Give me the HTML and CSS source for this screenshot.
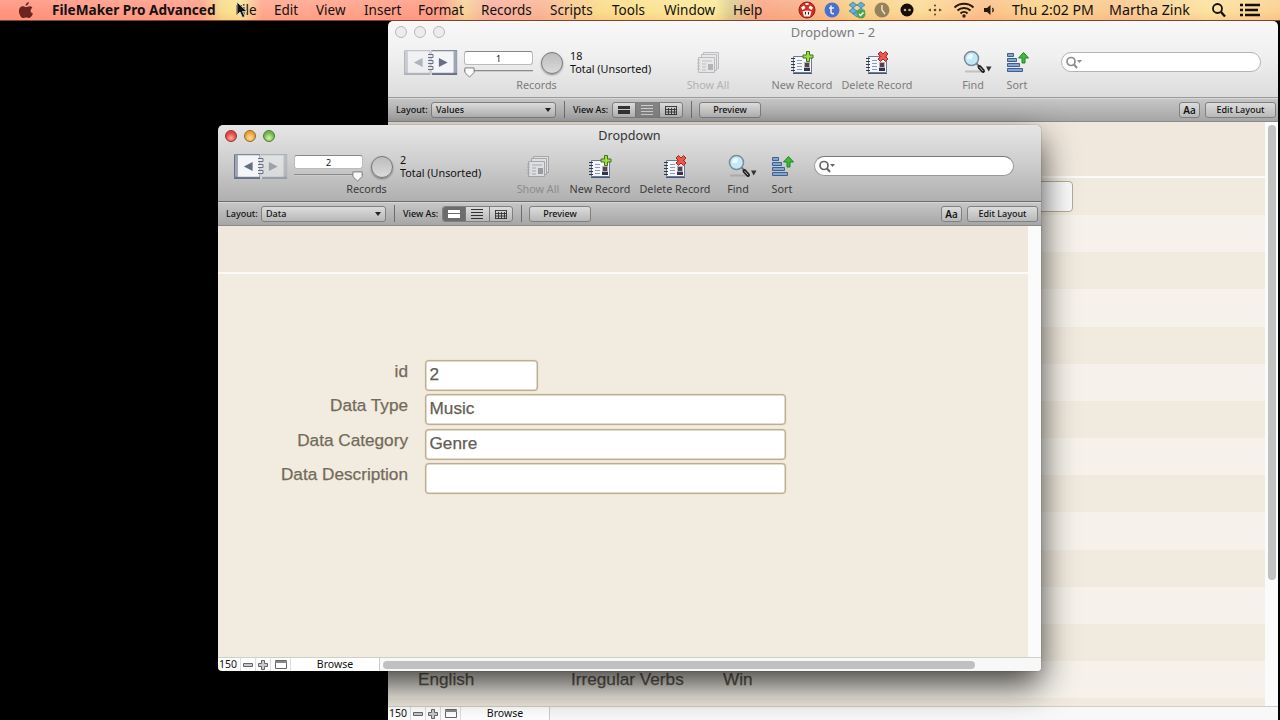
FILE: index.html
```
<!DOCTYPE html>
<html lang="en">
<head>
    <meta charset="UTF-8">
    <meta name="viewport" content="width=device-width, initial-scale=1.0">
    <title>Dropdown</title>
    <link rel="stylesheet" href="styles.css">
</head>
<body>
    <!-- Shared icons -->
    <svg class="icon-defs" width="0" height="0">
        <symbol id="icon-records" viewBox="0 0 26 26">
            <g fill="#e4e4e6" stroke="#9a9ca0">
                <path d="M8.500 2.500h15v16h-15z"/>
                <path d="M6.500 4.500h15v16h-15z"/>
                <path d="M3.500 7.500h16v15h-16z"/>
            </g>
            <path d="M2 10h3M2 13h3M2 16h3M2 19h3M7 11h10M7 14h4M7 17h4M7 20h4" stroke="#a0a2a8"/>
            <path d="M13 14h5v6h-5z" fill="#8d9096"/>
        </symbol>
        <symbol id="icon-card" viewBox="0 0 26 26">
            <path d="M4.500 6.500h18v16h-18z" fill="#f5f6fa" stroke="#6a7a98"/>
            <path d="M4 23.500h19" stroke="#4a5670"/>
            <path d="M2 8.500h4M2 11.500h4M2 14.500h4M2 17.500h4M2 20.500h4" stroke="#333b48"/>
            <path d="M8 10.500h5M8 13.500h5M8 16.500h5M8 19.500h5" stroke="#8d9cb6"/>
            <path d="M15 12h6v9h-6z" fill="#b5b2c0"/>
            <path d="M16 13h4v4h-4z" fill="#5c4048"/>
            <path d="M15 18h6v3h-6z" fill="#2e3648"/>
        </symbol>
        <symbol id="icon-new" viewBox="0 0 26 26">
            <use href="#icon-card"/>
            <path d="M17.500 1.500h3v3.500h3.500v3h-3.500v3.500h-3v-3.500h-3.500v-3h3.500z" fill="#a4d94a" stroke="#41751c"/>
        </symbol>
        <symbol id="icon-delete" viewBox="0 0 26 26">
            <use href="#icon-card"/>
            <path d="M14 4l2.500-2.500 2.500 2.500 2.500-2.500 2.500 2.500-2.500 2.500 2.500 2.500-2.500 2.500-2.500-2.500-2.500 2.500-2.500-2.500 2.500-2.500z" fill="#ee5648" stroke="#a12a28"/>
        </symbol>
        <symbol id="icon-find" viewBox="0 0 32 26">
            <path d="M3 21.500h16" stroke="#888" stroke-opacity=".4" stroke-width="2"/>
            <path d="M14.500 13.500l3 3" stroke="#777" stroke-width="2"/>
            <path d="M17.500 17l3.500 4" stroke="#222" stroke-width="4" stroke-linecap="round"/>
            <path d="M17.500 17l3.500 4" stroke="#bbb"/>
            <circle cx="9.500" cy="8.500" r="7" fill="#c3e9f6" stroke="#7a8a98" stroke-width="1.500"/>
            <path d="M5 9a5 5 0 0 1 6-5l-1 5z" fill="#f2fdff"/>
            <path d="M24 16.500h5.500l-2.800 5z" fill="#333"/>
        </symbol>
        <symbol id="icon-sort" viewBox="0 0 26 26">
            <path d="M3.500 3.500h6v3h-6zM3.500 8.500h9v3h-9zM3.500 13.500h12v3h-12zM3.500 18.500h15v3h-15z" fill="#82a4cf" stroke="#3f5f8e"/>
            <path d="M19.500 2.500l5 5.500h-3.500v5h-3v-5h-3.500z" fill="#3dbb38" stroke="#228427"/>
        </symbol>
        <symbol id="icon-search" viewBox="0 0 18 14">
            <circle cx="6" cy="5.500" r="4" fill="none" stroke="currentColor" stroke-width="1.700"/>
            <path d="M9 8.500l3 3.500" stroke="currentColor" stroke-width="2"/>
            <path d="M12 4h5l-2.500 3z" fill="currentColor"/>
        </symbol>
        <symbol id="icon-form" viewBox="0 0 14 10">
            <path d="M1 1h12v3h-12zM1 5h12v4h-12z" fill="currentColor"/>
        </symbol>
        <symbol id="icon-list" viewBox="0 0 14 10">
            <path d="M1 .5h12M1 3.500h12M1 6.500h12M1 9.500h12" stroke="currentColor"/>
        </symbol>
        <symbol id="icon-table" viewBox="0 0 14 10">
            <path d="M1 1.500h12M1 4.500h12M1 7h12M1 9.500h12M1.500 1v9M4.500 3v7M7.500 3v7M10.500 3v7M12.500 1v9" stroke="currentColor" stroke-width=".9"/>
        </symbol>
        <symbol id="icon-minus" viewBox="0 0 11 11">
            <path d="M.5 4.500h9v3h-9z" fill="#c8c8d0" stroke="#666"/>
        </symbol>
        <symbol id="icon-plus" viewBox="0 0 11 11">
            <path d="M3.500 1.500h3v3h3v3h-3v3h-3v-3h-3v-3h3z" fill="#c8c8d0" stroke="#666"/>
        </symbol>
        <symbol id="icon-panel" viewBox="0 0 12 9">
            <path d="M.5 .5h11v8h-11z" fill="#fff" stroke="#666"/>
            <path d="M0 2h12" stroke="#888" stroke-width="2"/>
        </symbol>
        <symbol id="icon-book-half" viewBox="0 0 27 26">
            <path d="M.5 .5h26v23h-26z" fill="#f4f5f8" stroke="currentColor"/>
            <path d="M2.500 1v23" stroke="currentColor" stroke-width="3" stroke-opacity=".6"/>
            <path d="M0 24.500h27" stroke="currentColor" stroke-width="1.500"/>
            <path d="M10 12.500l9-4.500v9z" fill="currentColor"/>
        </symbol>
        <symbol id="icon-rings" viewBox="0 0 6 26">
            <path d="M3 1v24" stroke="#d0d2d6" stroke-width="2"/>
            <path d="M0 4.500h5v3h-5M0 10.500h5v3h-5M0 16.500h5v3h-5" fill="#e8e8ea" stroke="#697284"/>
        </symbol>
    </svg>

    <!-- Menu bar -->
    <header class="menubar">
        <svg class="apple" viewBox="0 0 16 18">
            <path d="M11 0c.2 2-1.600 4-3.500 4C7.300 2.200 9 .4 11 0zM14.700 6c-2.700 1.700-2.200 5.200.7 6.300-.8 2.300-2.400 4.700-4 4.700-1.200 0-1.700-.7-3.100-.7s-2 .7-3.100.7C2.800 17 .5 12.700.5 9.500.5 6.400 2.400 4.600 4.600 4.600c1.400 0 2.500.8 3.500.8.900 0 2.200-.9 3.900-.9 1 0 2 .5 2.700 1.500z" fill="#6b2420"/>
        </svg>
        <nav class="menus">
            <span class="app-name">FileMaker Pro Advanced</span>
            <span>File</span>
            <span>Edit</span>
            <span>View</span>
            <span>Insert</span>
            <span>Format</span>
            <span>Records</span>
            <span>Scripts</span>
            <span>Tools</span>
            <span>Window</span>
            <span>Help</span>
        </nav>
        <div class="status-icons">
            <svg viewBox="0 0 18 18">
                <circle cx="9" cy="9" r="8" fill="#d62a22" stroke="#8e1f18"/>
                <path d="M3 6.500l3-2 1.500 2.500-3 2zM15 6.500l-3-2-1.500 2.500 3 2zM7.500 2h3v2h-3z" fill="#fff"/>
                <path d="M4.500 10.500q4.500-2 9 0l-1.500 5h-6z" fill="#fbeee6"/>
                <path d="M7.500 11v2.500M10.500 11v2.500" stroke="#222"/>
            </svg>
            <svg viewBox="0 0 18 18">
                <circle cx="9" cy="9" r="7.500" fill="#4a6fd0"/>
                <path d="M8 4.500v6.500q0 2 3 1.500M6 7h5" fill="none" stroke="#e8f0ff" stroke-width="1.600"/>
            </svg>
            <svg viewBox="0 0 18 18">
                <path d="M5 1l4 3-4 3-4-3zM13 1l4 3-4 3-4-3zM5 7l4 3-4 3-4-3zM13 7l4 3-4 3-4-3zM5 13l4-2 4 2-4 3z" fill="#5faee0" stroke="#347ba9" stroke-width=".7"/>
                <circle cx="13" cy="13" r="4.500" fill="#49a848"/>
                <path d="M11 13l1.500 1.500 3-3" fill="none" stroke="#fff" stroke-width="1.500"/>
            </svg>
            <svg viewBox="0 0 18 18">
                <circle cx="9" cy="9" r="7.500" fill="#94825f"/>
                <path d="M9 4v5l3 4" fill="none" stroke="#f5dfb0" stroke-width="1.500"/>
            </svg>
            <svg viewBox="0 0 18 18">
                <circle cx="9" cy="9" r="6.500" fill="#140f08"/>
                <circle cx="7" cy="9" r="1.300" fill="#d5a97f"/>
                <circle cx="11.500" cy="9" r="1.300" fill="#d5a97f"/>
            </svg>
            <svg class="dots" viewBox="0 0 18 18" fill="#5d4327">
                <circle cx="9" cy="9" r="1.300"/>
                <circle cx="9" cy="4.500" r="1"/>
                <circle cx="9" cy="13.500" r="1"/>
                <path d="M2 9l3-1.500v3zM16 9l-3-1.500v3z"/>
            </svg>
            <svg class="wifi" viewBox="0 0 22 18" fill="none" stroke="#241a10" stroke-width="2">
                <path d="M1.500 6.500a14 14 0 0 1 19 0M4.500 9.500a9.500 9.500 0 0 1 13 0M7.500 12.500a5 5 0 0 1 7 0"/>
                <circle cx="11" cy="15" r=".7"/>
            </svg>
            <svg viewBox="0 0 18 18">
                <path d="M4 7h3l3.500-3v10l-3.500-3h-3z" fill="#241a10"/>
                <path d="M12.500 7q1.500 2 0 4" fill="none" stroke="#241a10" stroke-width="1.300"/>
            </svg>
        </div>
        <span class="clock">Thu 2:02 PM</span>
        <span class="user">Martha Zink</span>
        <svg class="spotlight" viewBox="0 0 16 16" fill="none" stroke="#16100a" stroke-width="1.800">
            <circle cx="6.500" cy="6.500" r="4.500"/>
            <path d="M10 10l4 4.500" stroke-width="2.400"/>
        </svg>
        <svg class="notifications" viewBox="0 0 20 14" stroke="#16100a" stroke-width="2.400">
            <path d="M0 2h3M0 7h3M0 12h3M5 2h15M5 7h13M5 12h15"/>
        </svg>
        <svg class="cursor" viewBox="0 0 12 18">
            <path d="M1 1v13l3-3 2.500 5.500 2.500-1-2.500-5h4.500z" fill="#111" stroke="#ddd" stroke-width=".8"/>
        </svg>
    </header>

    <!-- Background window, list of values -->
    <section class="window window-back">
        <div class="chrome">
            <div class="titlebar">
                <div class="lights"><i></i><i></i><i></i></div>
                <h1>Dropdown – 2</h1>
            </div>
            <div class="toolbar">
                <div class="record-nav">
                    <div class="nav-controls">
                        <div class="book">
                            <svg class="page dim"><use href="#icon-book-half"/></svg>
                            <svg class="page flip"><use href="#icon-book-half"/></svg>
                            <svg class="rings"><use href="#icon-rings"/></svg>
                        </div>
                        <div class="slider">
                            <div class="record-number">1</div>
                            <div class="track at-start">
                                <svg viewBox="0 0 12 12"><path d="M1 1h10v5l-5 5-5-5z" fill="#fafafa" stroke="#777"/></svg>
                            </div>
                        </div>
                        <div class="pie"></div>
                        <div class="found">18<br>Total (Unsorted)</div>
                    </div>
                    <span class="tool-label">Records</span>
                </div>
                <div class="tool show-all"><svg><use href="#icon-records"/></svg><span class="tool-label">Show All</span></div>
                <div class="tool new-record"><svg><use href="#icon-new"/></svg><span class="tool-label">New Record</span></div>
                <div class="tool delete-record"><svg><use href="#icon-delete"/></svg><span class="tool-label">Delete Record</span></div>
                <div class="tool find"><svg><use href="#icon-find"/></svg><span class="tool-label">Find</span></div>
                <div class="tool sort"><svg><use href="#icon-sort"/></svg><span class="tool-label">Sort</span></div>
                <div class="search"><svg><use href="#icon-search"/></svg></div>
            </div>
        </div>
        <div class="layout-bar">
            <span class="bar-label">Layout:</span>
            <div class="layout-select">Values</div>
            <span class="divider"></span>
            <span class="bar-label view-label">View As:</span>
            <div class="segments">
                <span><svg><use href="#icon-form"/></svg></span>
                <span class="active"><svg><use href="#icon-list"/></svg></span>
                <span><svg><use href="#icon-table"/></svg></span>
            </div>
            <span class="divider"></span>
            <span class="button preview">Preview</span>
            <span class="button format"><b>A</b>a</span>
            <span class="button edit">Edit Layout</span>
        </div>
        <div class="content">
            <div class="layout">
                <div class="part-header"></div>
                <div class="rows">
                    <div class="row"><span class="row-field"></span></div>
                    <div class="row"></div>
                    <div class="row"></div>
                    <div class="row"></div>
                    <div class="row"></div>
                    <div class="row"></div>
                    <div class="row"></div>
                    <div class="row"></div>
                    <div class="row"></div>
                    <div class="row"></div>
                    <div class="row"></div>
                    <div class="row"></div>
                    <div class="row"></div>
                    <div class="row"><span>English</span><span>Irregular Verbs</span><span>Win</span></div>
                    <div class="row"></div>
                </div>
            </div>
            <div class="scroll-y"><div class="thumb"></div></div>
        </div>
        <div class="footer">
            <span class="zoom">150</span>
            <span class="foot-cell"><svg width="11" height="11"><use href="#icon-minus"/></svg></span>
            <span class="foot-cell"><svg width="11" height="11"><use href="#icon-plus"/></svg></span>
            <span class="foot-cell wide"><svg width="12" height="9"><use href="#icon-panel"/></svg></span>
            <span class="mode">Browse</span>
            <div class="scroll-x"></div>
        </div>
    </section>

    <!-- Front window, data form -->
    <section class="window window-front">
        <div class="chrome">
            <div class="titlebar">
                <div class="lights"><i class="red"></i><i class="yellow"></i><i class="green"></i></div>
                <h1>Dropdown</h1>
            </div>
            <div class="toolbar">
                <div class="record-nav">
                    <div class="nav-controls">
                        <div class="book">
                            <svg class="page"><use href="#icon-book-half"/></svg>
                            <svg class="page flip dim"><use href="#icon-book-half"/></svg>
                            <svg class="rings"><use href="#icon-rings"/></svg>
                        </div>
                        <div class="slider">
                            <div class="record-number">2</div>
                            <div class="track at-end">
                                <svg viewBox="0 0 12 12"><path d="M1 1h10v5l-5 5-5-5z" fill="#fafafa" stroke="#777"/></svg>
                            </div>
                        </div>
                        <div class="pie"></div>
                        <div class="found">2<br>Total (Unsorted)</div>
                    </div>
                    <span class="tool-label">Records</span>
                </div>
                <div class="tool show-all"><svg><use href="#icon-records"/></svg><span class="tool-label">Show All</span></div>
                <div class="tool new-record"><svg><use href="#icon-new"/></svg><span class="tool-label">New Record</span></div>
                <div class="tool delete-record"><svg><use href="#icon-delete"/></svg><span class="tool-label">Delete Record</span></div>
                <div class="tool find"><svg><use href="#icon-find"/></svg><span class="tool-label">Find</span></div>
                <div class="tool sort"><svg><use href="#icon-sort"/></svg><span class="tool-label">Sort</span></div>
                <div class="search"><svg><use href="#icon-search"/></svg></div>
            </div>
        </div>
        <div class="layout-bar">
            <span class="bar-label">Layout:</span>
            <div class="layout-select">Data</div>
            <span class="divider"></span>
            <span class="bar-label view-label">View As:</span>
            <div class="segments">
                <span class="active"><svg><use href="#icon-form"/></svg></span>
                <span><svg><use href="#icon-list"/></svg></span>
                <span><svg><use href="#icon-table"/></svg></span>
            </div>
            <span class="divider"></span>
            <span class="button preview">Preview</span>
            <span class="button format"><b>A</b>a</span>
            <span class="button edit">Edit Layout</span>
        </div>
        <div class="content">
            <div class="layout">
                <div class="part-header"></div>
                <div class="form">
                    <label>id</label><div class="field short">2</div>
                    <label>Data Type</label><div class="field">Music</div>
                    <label>Data Category</label><div class="field">Genre</div>
                    <label>Data Description</label><div class="field"></div>
                </div>
            </div>
            <div class="scroll-y"></div>
        </div>
        <div class="footer">
            <span class="zoom">150</span>
            <span class="foot-cell"><svg width="11" height="11"><use href="#icon-minus"/></svg></span>
            <span class="foot-cell"><svg width="11" height="11"><use href="#icon-plus"/></svg></span>
            <span class="foot-cell wide"><svg width="12" height="9"><use href="#icon-panel"/></svg></span>
            <span class="mode">Browse</span>
            <div class="scroll-x"><div class="thumb"></div></div>
        </div>
    </section>
</body>
</html>
```
FILE: styles.css
```
* {
    box-sizing: border-box;
}

body {
    margin: 0;
    width: 1280px;
    height: 720px;
    position: relative;
    overflow: hidden;
    background: #000;
    font-family: "Noto Sans", "Open Sans", sans-serif;
    font-size: 11px;
    color: #111;
}

.icon-defs {
    position: absolute;
}

/* Menu bar */
.menubar {
    display: flex;
    align-items: center;
    height: 21px;
    padding-left: 18px;
    border-bottom: 1px solid #7a4630;
    background:
        linear-gradient(rgba(255, 255, 255, 0.12), rgba(255, 255, 255, 0) 60%, rgba(255, 120, 60, 0.15)),
        linear-gradient(90deg, #ff9580 0, #ff9f8b 200px, #f7dc8c 222px, #fbe694 240px, #ffa890 262px, #ff9c88 440px, #f7d49a 465px, #f8b2a4 490px, #f9b698 540px, #fbdc8c 600px, #fcea9a 715px, #dccf94 730px, #fba888 760px, #f8b088 800px, #f9cf86 850px, #fbdc98 920px, #fcc08c 985px, #fbd48c 1040px, #fac790 1120px, #fbe3a0 1210px, #fbd092 1280px);
    font-size: 13.5px;
    line-height: 20px;
    white-space: nowrap;
}

.apple {
    width: 16px;
    height: 17px;
    margin-right: 18px;
}

.menus {
    display: grid;
    grid-template-columns: 183px 39px 42px 48px 54px 63px 69px 62px 52px 69px 49px;
}

.app-name {
    font-size: 13.6px;
    font-weight: bold;
}

.status-icons {
    display: flex;
    align-items: center;
    gap: 7px;
    margin-left: 16px;
}

.status-icons svg {
    width: 18px;
    height: 18px;
}

.status-icons .dots {
    margin-left: 3px;
}

.status-icons .wifi {
    width: 22px;
    margin-left: 2px;
}

.status-icons .wifi + svg {
    margin-left: -2px;
}

.clock {
    width: 97px;
    margin-left: 14px;
    font-size: 14.1px;
}

.user {
    width: 102px;
    font-size: 14.3px;
}

.spotlight {
    width: 16px;
    height: 16px;
}

.notifications {
    width: 20px;
    height: 14px;
    margin-left: 13px;
}

.cursor {
    position: absolute;
    left: 236px;
    top: 1px;
    width: 12px;
    height: 18px;
}

/* Windows */
.window {
    position: absolute;
    display: flex;
    flex-direction: column;
    overflow: hidden;
}

.window-back {
    left: 388px;
    top: 21px;
    width: 890px;
    height: 699px;
    border-radius: 5px 5px 0 0;
    --gap-new: 34px;
    --gap-find: 37px;
    --gap-search: 22px;
}

.window-front {
    left: 218px;
    top: 125px;
    width: 823px;
    height: 546px;
    border-radius: 5px 5px 4px 4px;
    box-shadow: 0 0 1px rgba(0, 0, 0, 0.7), 0 14px 34px rgba(0, 0, 0, 0.74);
    --gap-new: 2px;
    --gap-find: 4px;
    --gap-search: 10px;
}

.chrome {
    height: 77px;
    flex: none;
    border-bottom: 1px solid #6c6c6c;
    background: linear-gradient(#e6e6e6, #d0d0d0 45%, #b0b0b0);
}

.window-back .chrome {
    background: linear-gradient(#f8f8f8, #f0f0f0 45%, #dcdcdc);
    border-bottom-color: #9a9a9a;
}

.titlebar {
    display: grid;
    grid-template-columns: 60px 1fr 60px;
    align-items: center;
    height: 21px;
}

.titlebar h1 {
    margin: 0;
    font-size: 12.6px;
    font-weight: normal;
    text-align: center;
    color: #333;
}

.window-back h1 {
    font-size: 12.9px;
    line-height: 16px;
    color: #7c7c7c;
}

.lights {
    display: flex;
    gap: 7px;
    padding-left: 7px;
}

.lights i {
    width: 12px;
    height: 12px;
    border: 1px solid #b8b8b8;
    border-radius: 50%;
    background: #ececec;
}

.lights .red {
    border-color: #8e3434;
    background: radial-gradient(circle at 50% 70%, #ffaaa0, #e4433e 60%);
}

.lights .yellow {
    border-color: #94652a;
    background: radial-gradient(circle at 50% 70%, #ffe39a, #eda236 60%);
}

.lights .green {
    border-color: #487a36;
    background: radial-gradient(circle at 50% 70%, #d2f5a4, #70b650 60%);
}

.toolbar {
    display: flex;
    padding: 8px 0 0 16px;
}

.record-nav {
    width: 265px;
    margin-right: 15px;
    text-align: center;
}

.nav-controls {
    display: flex;
    height: 28px;
    text-align: left;
}

.tool-label {
    display: block;
    font-size: 10.8px;
    line-height: 14px;
    color: #3c3c3c;
    white-space: nowrap;
}

.window-back .tool-label {
    color: #7c7c7c;
}

.show-all .tool-label {
    color: #8c8c8c;
}

.window-back .show-all .tool-label {
    color: #b2b2b2;
}

.book {
    position: relative;
    display: flex;
    width: 53px;
    margin-right: 7px;
}

.page {
    width: 27px;
    height: 26px;
    color: #657084;
}

.page.flip {
    transform: scaleX(-1);
}

.page.dim {
    opacity: 0.45;
}

.rings {
    position: absolute;
    left: 24px;
    top: 0;
    width: 6px;
    height: 26px;
}

.slider {
    width: 69px;
    margin-right: 8px;
}

.record-number {
    height: 14px;
    margin-top: 1px;
    border: 1px solid #bbb;
    border-top-color: #888;
    border-radius: 3px;
    background: #fff;
    font-size: 9px;
    line-height: 13px;
    text-align: center;
}

.track {
    display: flex;
    height: 2px;
    margin-top: 5px;
    background: #8b8b8b;
    border-bottom: 1px solid #ccc;
}

.track.at-end {
    justify-content: flex-end;
}

.track svg {
    flex: none;
    width: 11px;
    height: 11px;
    margin-top: -3px;
}

.pie {
    width: 22px;
    height: 22px;
    margin: 2px 7px 0 0;
    border: 1px solid #777;
    border-radius: 50%;
    background: linear-gradient(#bdbdbd, #dadada);
    box-shadow: 0 1px 2px rgba(0, 0, 0, 0.4);
}

.found {
    margin-top: -1px;
    font-size: 10.8px;
    line-height: 13px;
    color: #111;
    white-space: nowrap;
}

.tool {
    display: flex;
    flex-direction: column;
    align-items: center;
    width: 44px;
}

.tool svg {
    width: 26px;
    height: 26px;
    margin-bottom: 2px;
}

.show-all {
    width: 48px;
}

.window-front .show-all svg {
    opacity: 0.8;
}

.window-back .show-all svg {
    opacity: 0.6;
}

.new-record {
    width: 72px;
    margin-left: var(--gap-new);
}

.delete-record {
    width: 74px;
    margin-left: 2px;
}

.find {
    margin-left: var(--gap-find);
}

.find svg {
    width: 32px;
    margin-left: 9px;
}

.search {
    width: 200px;
    height: 20px;
    margin: 2px 0 0 var(--gap-search);
    padding: 3px 3px;
    border: 1px solid #999;
    border-top-color: #777;
    border-radius: 10px;
    background: #fff;
    color: #666;
}

.window-back .search {
    border-color: #b4b4b4;
    color: #8c8c8c;
}

.search svg {
    display: block;
    width: 18px;
    height: 14px;
}

/* Layout bar */
.layout-bar {
    display: flex;
    align-items: center;
    flex: none;
    height: 24px;
    padding: 0 3px 1px 8px;
    border-top: 1px solid #d8d8d8;
    border-bottom: 1px solid #8a8a8a;
    background: linear-gradient(#c6c6c6, #a6a6a6);
    font-size: 9px;
    font-weight: 500;
    white-space: nowrap;
}

.window-back .layout-bar {
    padding-right: 2px;
}

.bar-label {
    width: 35px;
}

.view-label {
    width: 39px;
}

.layout-select,
.segments,
.button {
    height: 16px;
    border: 1px solid #808080;
    border-radius: 3px;
    background: linear-gradient(#dcdcdc, #b8b8b8);
    line-height: 14px;
}

.layout-select {
    display: flex;
    justify-content: space-between;
    align-items: center;
    width: 125px;
    padding: 0 4px;
}

.layout-select::after {
    content: "";
    border: 3px solid transparent;
    border-top: 4px solid #222;
    border-bottom: 0;
}

.divider {
    width: 1px;
    height: 17px;
    margin: 0 8px;
    background: #6d6d6d;
}

.segments {
    display: flex;
    width: 71px;
    overflow: hidden;
    color: #333;
}

.segments span {
    display: flex;
    flex: 1;
    align-items: center;
    justify-content: center;
}

.segments span + span {
    border-left: 1px solid #777;
}

.segments svg {
    width: 14px;
    height: 10px;
}

.segments .active {
    background: #6c6c6c;
    color: #fff;
}

.window-back .segments .active {
    background: #858585;
    color: #d0d0d0;
}

.button {
    text-align: center;
}

.preview {
    width: 62px;
    margin-left: -1px;
}

.format {
    width: 21px;
    margin-left: auto;
    font-size: 10px;
}

.format b {
    font-weight: 600;
}

.edit {
    width: 71px;
    margin-left: 5px;
}

/* Content */
.content {
    display: flex;
    flex: 1;
    min-height: 0;
}

.layout {
    flex: 1;
    overflow: hidden;
    background: #f2ebdf;
    font-family: "Liberation Sans", Arial, sans-serif;
    font-size: 17.2px;
    color: #736a5a;
    -webkit-text-stroke: 0.25px currentColor;
}

.part-header {
    height: 48px;
    border-bottom: 2px solid #fcfaf6;
    background: #f0e8dd;
}

.window-back .part-header {
    height: 56px;
}

.scroll-y {
    width: 13px;
    padding: 3px 2px 0 3px;
    background: #fbfbfb;
}

.scroll-y .thumb {
    width: 8px;
    height: 455px;
    border-radius: 4px;
    background: #c1c1c1;
}

.row {
    display: grid;
    grid-template-columns: 153px 152px 1fr;
    height: 37.17px;
    padding-left: 30px;
    background: #f1ebdf;
    line-height: 36px;
    color: #665f54;
}

.row:nth-child(even) {
    background: #f6f2eb;
}

.row-field {
    grid-column: 3;
    width: 350px;
    height: 31px;
    margin-top: 3px;
    border: 1.5px solid #b3ab98;
    border-radius: 4px;
    background: #fbfbfb;
}

.form {
    display: grid;
    grid-template-columns: 190px 361px;
    column-gap: 17px;
    row-gap: 3.3px;
    padding-top: 86px;
}

.form label {
    line-height: 23px;
    text-align: right;
}

.field {
    height: 31px;
    padding-left: 3.5px;
    border: 1px solid #bcae8f;
    border-radius: 4px;
    box-shadow: inset 0 0 0 0.5px #c4b798, 0 0 1px #c4b798;
    background: #fff;
    line-height: 27px;
    color: #635d52;
}

.field.short {
    width: 113px;
}

/* Footer */
.footer {
    display: flex;
    flex: none;
    height: 14px;
    border-top: 1px solid #cfcfca;
    background: #fff;
    font-size: 10.5px;
    line-height: 13px;
}

.zoom {
    width: 22px;
    padding-left: 1px;
}

.foot-cell {
    display: flex;
    align-items: center;
    justify-content: center;
    width: 15px;
    border-left: 1px solid #ddd;
}

.foot-cell.wide {
    width: 20px;
}

.mode {
    width: 90px;
    border-left: 1px solid #ddd;
    border-right: 1px solid #ccc;
    text-align: center;
}

.scroll-x {
    flex: 1;
    padding: 3px 0 0 3px;
    background: #f8f8f8;
}

.scroll-x .thumb {
    width: 592px;
    height: 8px;
    border-radius: 4px;
    background: #c0c0c0;
}
```
